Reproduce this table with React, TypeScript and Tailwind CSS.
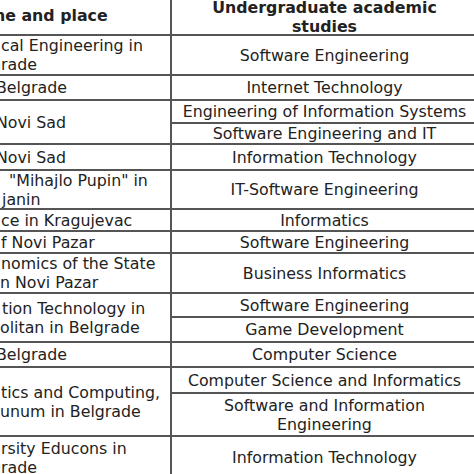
import React from 'react';

type Line = { text: string; cls: string };
type Sub = { cls: string; lines: string[] };
type Row = { cls: string; left: Line[]; right: Sub[] };

// visible part of the table; the left column is cut at the page edge
const rows: Row[] = [
  {
    cls: 'h-[40px]',
    left: [
      { text: 'cal Engineering in', cls: 'ml-[1px]' },
      { text: 'grade', cls: '-ml-[9px]' },
    ],
    right: [{ cls: 'flex-1', lines: ['Software Engineering'] }],
  },
  {
    cls: 'h-[25px]',
    left: [{ text: 'Belgrade', cls: '-ml-[4px]' }],
    right: [{ cls: 'flex-1', lines: ['Internet Technology'] }],
  },
  {
    cls: 'h-[44px]',
    left: [{ text: 'Novi Sad', cls: '-ml-[4px]' }],
    right: [
      { cls: 'h-[24px] border-b-2 border-[#555]', lines: ['Engineering of Information Systems'] },
      { cls: 'flex-1', lines: ['Software Engineering and IT'] },
    ],
  },
  {
    cls: 'h-[26px]',
    left: [{ text: 'Novi Sad', cls: '-ml-[4px]' }],
    right: [{ cls: 'flex-1', lines: ['Information Technology'] }],
  },
  {
    cls: 'h-[39px]',
    left: [
      { text: ' "Mihajlo Pupin" in', cls: 'ml-[4px]' },
      { text: 'janin', cls: 'ml-[2px]' },
    ],
    right: [{ cls: 'flex-1', lines: ['IT-Software Engineering'] }],
  },
  {
    cls: 'h-[22px]',
    left: [{ text: 'ce in Kragujevac', cls: 'ml-[1px]' }],
    right: [{ cls: 'flex-1', lines: ['Informatics'] }],
  },
  {
    cls: 'h-[22px]',
    left: [{ text: 'f Novi Pazar', cls: 'ml-[1px]' }],
    right: [{ cls: 'flex-1', lines: ['Software Engineering'] }],
  },
  {
    cls: 'h-[40px]',
    left: [
      { text: 'nomics of the State', cls: 'ml-[1px]' },
      { text: 'n Novi Pazar', cls: 'ml-[0px]' },
    ],
    right: [{ cls: 'flex-1', lines: ['Business Informatics'] }],
  },
  {
    cls: 'h-[49px]',
    left: [
      { text: 'tion Technology in', cls: 'ml-[2px]' },
      { text: 'olitan in Belgrade', cls: 'ml-[0px]' },
    ],
    right: [
      { cls: 'h-[24px] border-b-2 border-[#555]', lines: ['Software Engineering'] },
      { cls: 'flex-1', lines: ['Game Development'] },
    ],
  },
  {
    cls: 'h-[25px]',
    left: [{ text: 'Belgrade', cls: '-ml-[4px]' }],
    right: [{ cls: 'flex-1', lines: ['Computer Science'] }],
  },
  {
    cls: 'h-[69px]',
    left: [
      { text: 'tics and Computing,', cls: 'ml-[1px]' },
      { text: 'unum in Belgrade', cls: 'ml-[0px]' },
    ],
    right: [
      { cls: 'h-[26px] border-b-2 border-[#555]', lines: ['Computer Science and Informatics'] },
      { cls: 'flex-1', lines: ['Software and Information', 'Engineering'] },
    ],
  },
  {
    cls: 'h-[43px]',
    left: [
      { text: 'rsity Educons in', cls: 'ml-[1px]' },
      { text: 'grade', cls: '-ml-[9px]' },
    ],
    right: [{ cls: 'flex-1', lines: ['Information Technology'] }],
  },
];

export default function App() {
  return (
    <div className="w-[474px] h-[474px] overflow-hidden bg-white font-['DejaVu_Sans','Verdana',sans-serif] text-[15.8px] leading-[19px] text-[#222]">
      <div className="w-[477px]">
        {/* header */}
        <div className="flex h-[36px] border-b-2 border-[#555] font-bold">
          <div className="w-[172px] shrink-0 border-r-2 border-[#555] flex items-center overflow-hidden whitespace-nowrap pb-[3px]">
            <span className="-ml-[6px]">ne and place</span>
          </div>
          <div className="flex-1 flex flex-col items-center justify-center text-center">
            <div>Undergraduate academic</div>
            <div>studies</div>
          </div>
        </div>

        {rows.map((row, i) => (
          <div key={i} className={`flex border-b-2 border-[#555] ${row.cls}`}>
            <div className="w-[172px] shrink-0 border-r-2 border-[#555] flex flex-col justify-center overflow-hidden whitespace-pre">
              {row.left.map((l, j) => (
                <div key={j} className={l.cls}>
                  {l.text}
                </div>
              ))}
            </div>
            <div className="flex-1 flex flex-col">
              {row.right.map((s, k) => (
                <div key={k} className={`flex flex-col items-center justify-center text-center whitespace-nowrap ${s.cls}`}>
                  {s.lines.map((t, m) => (
                    <div key={m}>{t}</div>
                  ))}
                </div>
              ))}
            </div>
          </div>
        ))}
      </div>
    </div>
  );
}
